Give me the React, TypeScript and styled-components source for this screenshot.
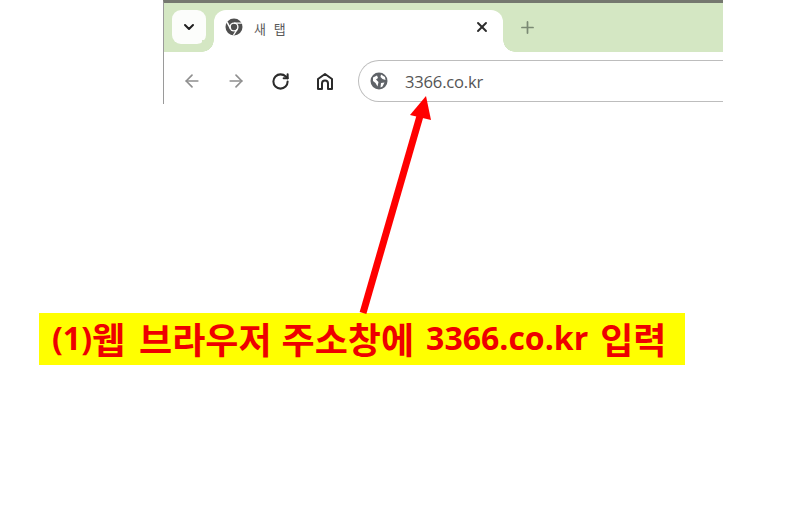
import styled, { createGlobalStyle } from "styled-components";
import { LuArrowLeft, LuArrowRight, LuPlus, LuRotateCw, LuX, LuChevronDown } from "react-icons/lu";

const GlobalStyle = createGlobalStyle`
  html, body {
    margin: 0;
    padding: 0;
    background: #fff;
    font-family: "Open Sans", "Noto Sans CJK KR", sans-serif;
  }
`;

const Page = styled.div`
  position: relative;
  width: 800px;
  height: 514px;
  overflow: hidden;
  background: #fff;
`;

const BrowserWindow = styled.div`
  width: 560px;
  height: 104px;
  margin-left: 163px;
  box-sizing: border-box;
  border-top: 3px solid #75786f;
  border-left: 1px solid #9a9a9a;
`;

const TabStrip = styled.div`
  display: flex;
  height: 49px;
  padding: 7px 0 0 8px;
  box-sizing: border-box;
  background: #d4e7c3;
`;

const TabMenuButton = styled.div`
  width: 34px;
  height: 34px;
  border-radius: 9px;
  background: #fcfdfb;
  color: #1f1f1f;
  display: flex;
  align-items: center;
  justify-content: center;
`;

const ActiveTab = styled.div`
  position: relative;
  width: 289px;
  height: 42px;
  margin-left: 8px;
  padding: 0 13px 8px 11px;
  box-sizing: border-box;
  display: flex;
  align-items: center;
  background: #fff;
  border-radius: 12px 12px 0 0;

  &::before,
  &::after {
    content: "";
    position: absolute;
    bottom: 0;
    width: 12px;
    height: 12px;
  }
  &::before {
    left: -12px;
    background: radial-gradient(circle at 0 0, #d4e7c3 11.5px, #fff 12px);
  }
  &::after {
    right: -12px;
    background: radial-gradient(circle at 100% 0, #d4e7c3 11.5px, #fff 12px);
  }
`;

const TabTitle = styled.span`
  flex: 1;
  margin: 2px 0 0 11px;
  font-family: "Noto Sans CJK KR", sans-serif;
  font-size: 13px;
  letter-spacing: 2px;
  word-spacing: 1px;
  color: #5a5a5a;
`;

const NewTabButton = styled.div`
  margin-left: 15px;
  height: 34px;
  display: flex;
  align-items: center;
  color: #7b8a74;
`;

const Toolbar = styled.div`
  display: flex;
  align-items: center;
  height: 52px;
  padding: 6px 0 0 18px;
  box-sizing: border-box;
  background: #fff;
`;

const NavButton = styled.div<{ $muted?: boolean; $gap: number }>`
  display: flex;
  margin-right: ${(p) => p.$gap}px;
  color: ${(p) => (p.$muted ? "#8f8f8f" : "#2b2b2b")};
`;

const AddressBar = styled.div`
  flex: 1;
  height: 42px;
  display: flex;
  align-items: center;
  padding-left: 11px;
  box-sizing: border-box;
  border: 1px solid #bdbdbd;
  border-right: none;
  border-radius: 21px 0 0 21px;
`;

const AddressText = styled.span`
  margin-left: 17px;
  font-size: 16.6px;
  letter-spacing: -0.2px;
  color: #555;
`;

const Callout = styled.div`
  width: 646px;
  height: 52px;
  margin: 209px 0 0 39px;
  padding: 0 0 3px 13px;
  box-sizing: border-box;
  display: flex;
  align-items: center;
  background: #ffff00;
  color: #ee0000;
  font-size: 32px;
  font-weight: 700;
  white-space: pre;
`;

const Hangul = styled.span<{ $gapLeft?: number }>`
  font-family: "Noto Sans CJK KR", sans-serif;
  font-size: 36px;
  margin-left: ${(p) => p.$gapLeft ?? 0}px;
`;

const Latin = styled.span<{ $gapLeft: number }>`
  margin-left: ${(p) => p.$gapLeft}px;
`;

const ArrowOverlay = styled.svg`
  position: absolute;
  left: 0;
  top: 0;
  pointer-events: none;
`;

const ChromeLogo = () => (
  <svg width="18" height="18" viewBox="0 0 18 18">
    <circle cx="9" cy="9" r="8.5" fill="#4f4f4f" />
    <circle cx="9" cy="9" r="4.6" fill="#fff" />
    <circle cx="9" cy="9" r="3.2" fill="#4f4f4f" />
    <path d="M9 4.4 H16.6 L17 5.8 H9 Z M5 11.3 L1.6 5 L2.6 3.6 L6.4 10.5 Z M12.9 11.5 L9 17.5 L7.6 17.4 L11.6 10.8 Z" fill="#fff" />
  </svg>
);

const GlobeIcon = () => (
  <svg width="18" height="18" viewBox="0 0 18 18">
    <circle cx="9" cy="9" r="8.5" fill="#5f6368" />
    <path d="M3 5.5 L7 3.5 L8 6 L6 7.5 L8.5 10 L7.5 14.5 L5.5 11 L3 9 Z M11 2.5 L15 5 L15.5 8 L12.5 7 L10.5 5 Z M11 11 L14.5 10.5 L12.5 14.5 L10.5 15.5 Z" fill="#fff" />
  </svg>
);

const HomeIcon = () => (
  <svg width="18" height="18" viewBox="0 0 18 18" fill="none" stroke="currentColor" strokeWidth="2">
    <path d="M2 17 V7 L9 2 L16 7 V17 H12 V11.5 A3 3 0 0 0 6 11.5 V17 Z" strokeLinejoin="round" />
  </svg>
);

export default function App() {
  return (
    <Page>
      <GlobalStyle />
      <BrowserWindow>
        <TabStrip>
          <TabMenuButton>
            <LuChevronDown size={16} strokeWidth={3} />
          </TabMenuButton>
          <ActiveTab>
            <ChromeLogo />
            <TabTitle>새 탭</TabTitle>
            <LuX size={16} strokeWidth={2.8} color="#2b2b2b" />
          </ActiveTab>
          <NewTabButton>
            <LuPlus size={19} strokeWidth={2.2} />
          </NewTabButton>
        </TabStrip>
        <Toolbar>
          <NavButton $muted $gap={24}>
            <LuArrowLeft size={20} />
          </NavButton>
          <NavButton $muted $gap={25}>
            <LuArrowRight size={20} />
          </NavButton>
          <NavButton $gap={26}>
            <LuRotateCw size={19} strokeWidth={2.6} />
          </NavButton>
          <NavButton $gap={24}>
            <HomeIcon />
          </NavButton>
          <AddressBar>
            <GlobeIcon />
            <AddressText>3366.co.kr</AddressText>
          </AddressBar>
        </Toolbar>
      </BrowserWindow>
      <Callout>
        (1)
        <Hangul>웹</Hangul>
        <Hangul $gapLeft={14}>브라우저</Hangul>
        <Hangul $gapLeft={10}>주소창에</Hangul>
        <Latin $gapLeft={12}>3366.co.kr</Latin>
        <Hangul $gapLeft={12}>입력</Hangul>
      </Callout>
      <ArrowOverlay width="800" height="514" viewBox="0 0 800 514">
        <line x1="363" y1="313" x2="420" y2="116" stroke="#ff0000" strokeWidth="7" />
        <polygon points="426,96 410,115 431,120" fill="#ff0000" />
      </ArrowOverlay>
    </Page>
  );
}
